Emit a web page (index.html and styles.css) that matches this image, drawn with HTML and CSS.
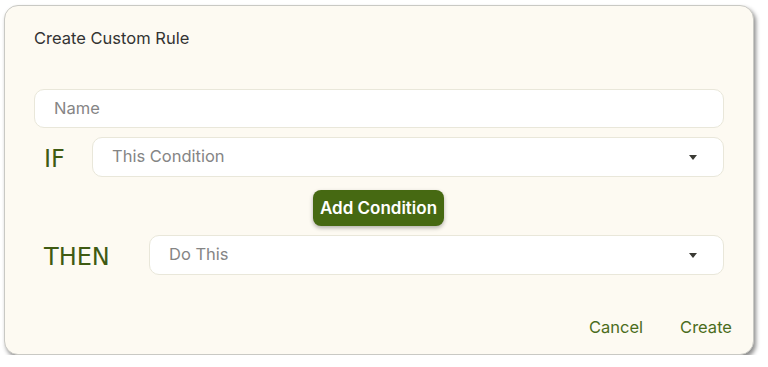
FILE: index.html
```html
<!DOCTYPE html>
<html lang="en">
<head>
    <meta charset="UTF-8">
    <title>Create Custom Rule</title>
    <link rel="stylesheet" href="styles.css">
</head>
<body>
<div class="dialog">
    <h2 class="title">Create Custom Rule</h2>
    <div class="field name">Name</div>
    <div class="row if-row">
        <span class="kw">IF</span>
        <div class="field select">
            <span>This Condition</span>
            <i class="caret"></i>
        </div>
    </div>
    <div class="add-wrap">
        <button class="add">Add Condition</button>
    </div>
    <div class="row then-row">
        <span class="kw">THEN</span>
        <div class="field select">
            <span>Do This</span>
            <i class="caret"></i>
        </div>
    </div>
    <div class="actions">
        <button class="link">Cancel</button>
        <button class="link">Create</button>
    </div>
</div>
</body>
</html>
```

FILE: styles.css
```css
*{
    margin: 0;
    padding: 0;
    box-sizing: border-box;
}
body{
    background: #fff;
    padding: 5px 0 0 4px;
    font-family: Inter, "Noto Sans", sans-serif;
}
.dialog{
    width: 750px;
    height: 350px;
    background: #fdfaf2;
    border: 1px solid #c9c9c4;
    border-radius: 14px;
    box-shadow: 2px 3px 4px rgba(0,0,0,.45);
    padding: 22px 29px 0 29px;
    display: flex;
    flex-direction: column;
}
.title{
    font-weight: normal;
    font-size: 16.5px;
    color: #333;
    height: 20px;
    line-height: 20px;
}
.field{
    background: #fff;
    border: 1px solid #e9e7da;
    border-radius: 10px;
    height: 40px;
    color: #858585;
    font-size: 16.5px;
    display: flex;
    align-items: center;
    padding: 0 19px 2px;
}
.name{
    margin-top: 41px;
    height: 39px;
    width: 690px;
}
.row{
    display: flex;
    align-items: center;
    width: 690px;
}
.if-row{
    margin-top: 9px;
}
.then-row{
    margin-top: 9px;
}
.kw{
    font-family: "DejaVu Sans", sans-serif;
    font-size: 24px;
    color: #3f5a12;
    padding-left: 10px;
    padding-top: 4px;
}
.if-row .kw{
    width: 58px;
}
.then-row .kw{
    width: 115px;
}
.select{
    flex: 1;
    justify-content: space-between;
}
.caret{
    width: 0;
    height: 0;
    border-left: 4px solid transparent;
    border-right: 4px solid transparent;
    border-top: 5px solid #3a3a34;
    margin-right: 7px;
    margin-top: 2px;
}
.add-wrap{
    display: flex;
    padding-left: 279px;
    margin-top: 13px;
}
.add{
    background: #466912;
    color: #fff;
    border: none;
    border-radius: 8px;
    font-family: Inter, sans-serif;
    font-weight: 600;
    font-size: 17px;
    height: 36px;
    padding: 0;
    width: 131px;
    box-shadow: 0 2px 4px rgba(0,0,0,.3);
}
.actions{
    margin-top: auto;
    margin-bottom: 17px;
    display: flex;
    justify-content: flex-end;
    gap: 37px;
    margin-right: -8px;
}
.link{
    background: none;
    border: none;
    font-family: Inter, sans-serif;
    font-size: 16.5px;
    color: #4b6d1c;
}
```
